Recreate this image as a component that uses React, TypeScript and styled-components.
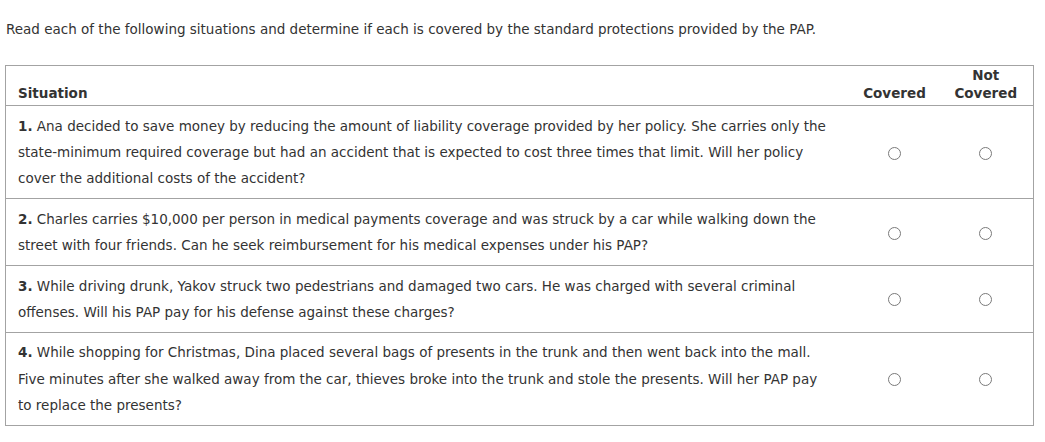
import React from "react";
import styled, { createGlobalStyle } from "styled-components";

const Global = createGlobalStyle`
  html, body { margin: 0; padding: 0; background: #fff; }
  body {
    font-family: "DejaVu Sans", Verdana, sans-serif;
    font-size: 13.5px;
    color: #333;
  }
`;

const Page = styled.div`
  padding: 19px 13px 0 5px;
`;

const Intro = styled.p`
  margin: 0 0 0 1px;
  line-height: 20px;
`;

const Table = styled.table`
  margin-top: 26px;
  width: 1028px;
  table-layout: fixed;
  border-collapse: collapse;
  border: 1px solid #a3a3a3;
`;

const Col = styled.col<{ $w: number }>`
  width: ${(p) => p.$w}px;
`;

const HeadCell = styled.th<{ $center?: boolean }>`
  font-weight: bold;
  text-align: ${(p) => (p.$center ? "center" : "left")};
  vertical-align: bottom;
  padding: 0 12px 3px;
  line-height: 18px;
  border-bottom: 1px solid #a3a3a3;
  height: 36px;
  white-space: nowrap;
`;

const Row = styled.tr`
  border-bottom: 1px solid #a3a3a3;
`;

const TextCell = styled.td`
  padding: 6.5px 18px 6.5px 12px;
  line-height: 26.4px;
  vertical-align: middle;
`;

const RadioCell = styled.td`
  text-align: center;
  vertical-align: middle;
`;

const Radio = styled.span`
  display: inline-block;
  width: 11px;
  height: 11px;
  border: 1px solid #7a7a7a;
  border-radius: 50%;
  vertical-align: middle;
`;

const items: [string, string][] = [
  [
    "1.",
    "Ana decided to save money by reducing the amount of liability coverage provided by her policy. She carries only the state-minimum required coverage but had an accident that is expected to cost three times that limit. Will her policy cover the additional costs of the accident?",
  ],
  [
    "2.",
    "Charles carries $10,000 per person in medical payments coverage and was struck by a car while walking down the street with four friends. Can he seek reimbursement for his medical expenses under his PAP?",
  ],
  [
    "3.",
    "While driving drunk, Yakov struck two pedestrians and damaged two cars. He was charged with several criminal offenses. Will his PAP pay for his defense against these charges?",
  ],
  [
    "4.",
    "While shopping for Christmas, Dina placed several bags of presents in the trunk and then went back into the mall. Five minutes after she walked away from the car, thieves broke into the trunk and stole the presents. Will her PAP pay to replace the presents?",
  ],
];

export default function App() {
  return (
    <>
      <Global />
      <Page>
        <Intro>
          Read each of the following situations and determine if each is covered by the standard protections provided by the PAP.
        </Intro>
        <Table>
          <colgroup>
            <Col $w={845} />
            <Col $w={88} />
            <Col $w={95} />
          </colgroup>
          <thead>
            <tr>
              <HeadCell>Situation</HeadCell>
              <HeadCell $center>Covered</HeadCell>
              <HeadCell $center>
                Not
                <br />
                Covered
              </HeadCell>
            </tr>
          </thead>
          <tbody>
            {items.map(([n, t]) => (
              <Row key={n}>
                <TextCell>
                  <b>{n}</b> {t}
                </TextCell>
                <RadioCell>
                  <Radio />
                </RadioCell>
                <RadioCell>
                  <Radio />
                </RadioCell>
              </Row>
            ))}
          </tbody>
        </Table>
      </Page>
    </>
  );
}
